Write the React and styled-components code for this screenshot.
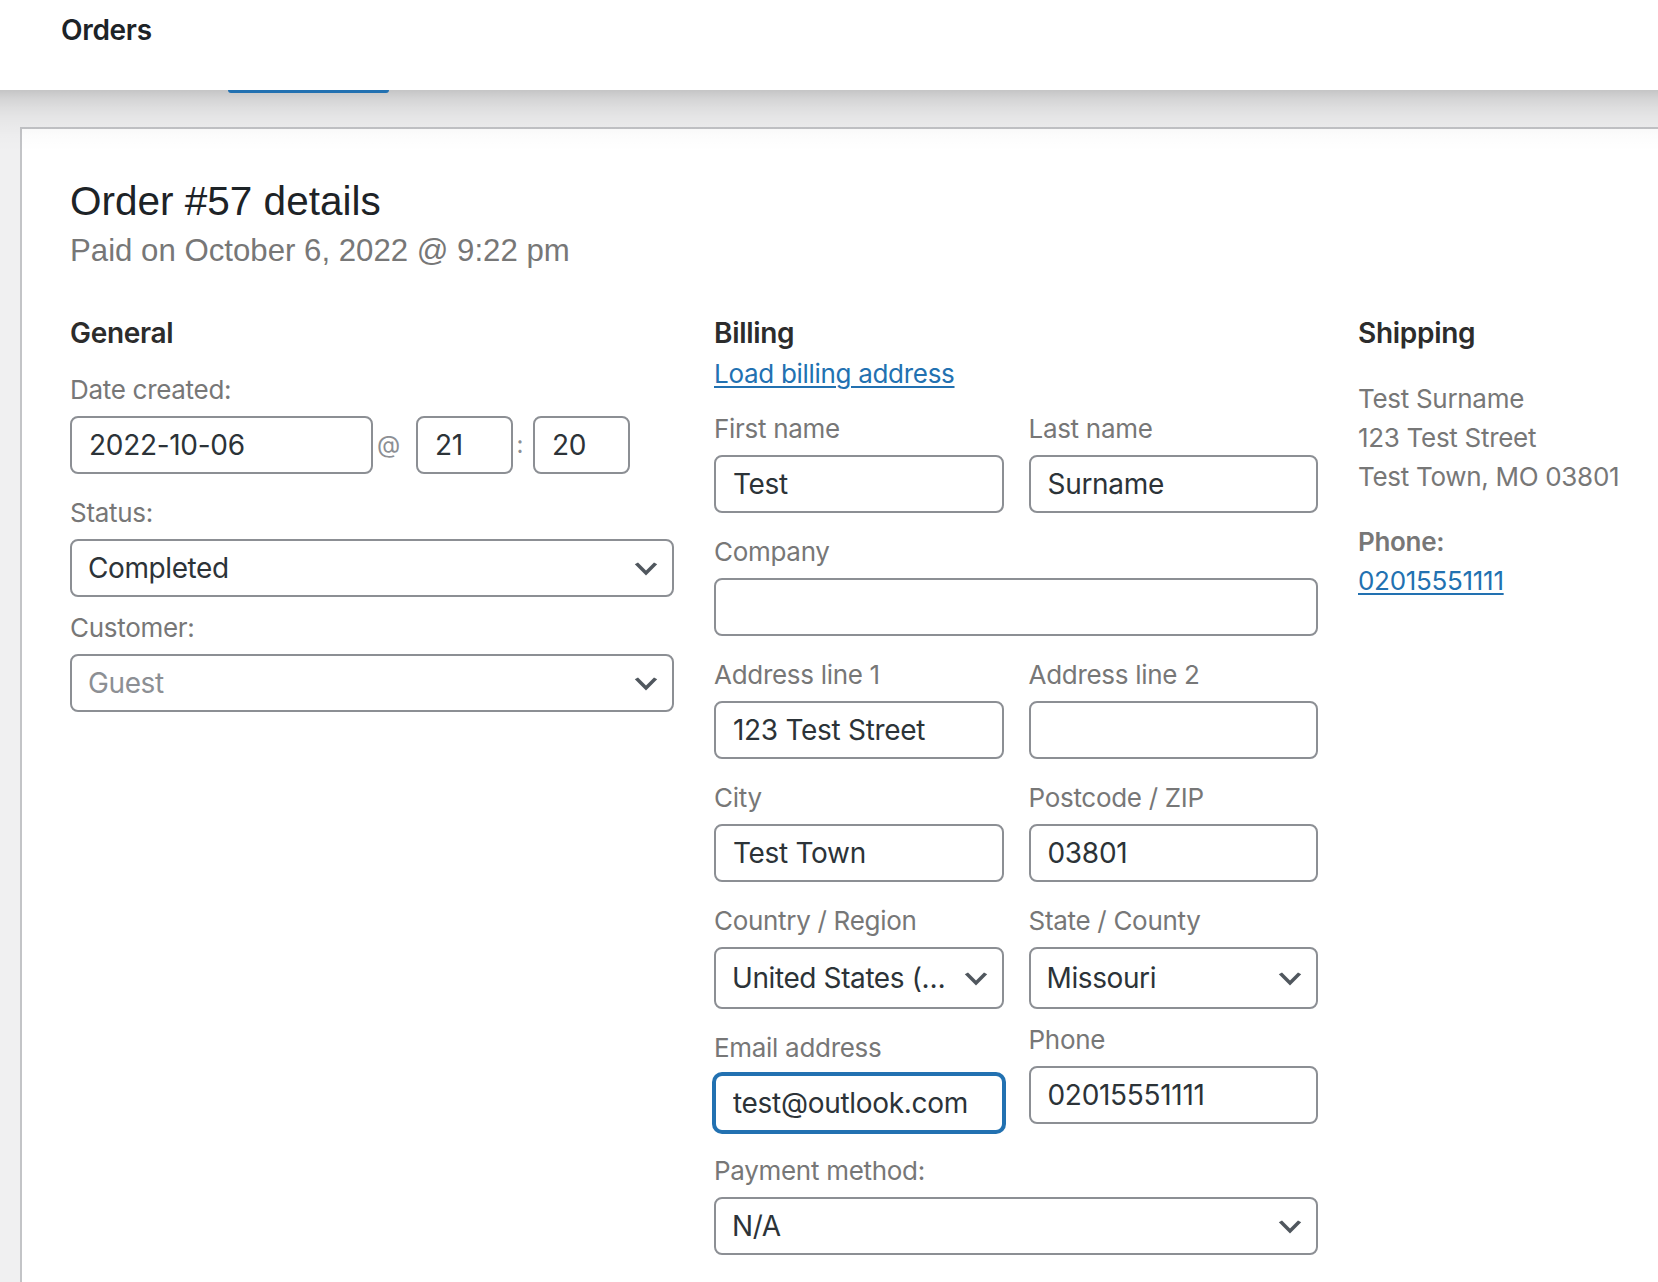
import React from 'react';
import styled, { createGlobalStyle } from 'styled-components';

const GlobalStyle = createGlobalStyle`
  html, body {
    margin: 0;
    padding: 0;
    height: 100%;
    overflow: hidden;
    background: #f0f0f1;
  }
  body {
    font-family: Inter, "Noto Sans", sans-serif;
    -webkit-font-smoothing: antialiased;
  }
  #root { height: 100%; }
  *, *::before, *::after { box-sizing: border-box; }
`;

const Page = styled.div`
  height: 100vh;
  display: flex;
  flex-direction: column;
  background: #f0f0f1;
  overflow: hidden;
`;

const Header = styled.header`
  position: relative;
  z-index: 2;
  flex: none;
  height: 90px;
  background: #fff;
  padding: 16px 0 0 61px;

  &::after {
    content: '';
    position: absolute;
    left: 0;
    right: 0;
    top: 100%;
    height: 62px;
    pointer-events: none;
    background: linear-gradient(
      to bottom,
      rgba(0, 0, 0, 0.18) 0px,
      rgba(0, 0, 0, 0.12) 8px,
      rgba(0, 0, 0, 0.075) 18px,
      rgba(0, 0, 0, 0.045) 28px,
      rgba(0, 0, 0, 0.028) 37px,
      rgba(0, 0, 0, 0.013) 46px,
      rgba(0, 0, 0, 0) 62px
    );
  }
`;

const PageTitle = styled.h1`
  margin: 0;
  font: 600 28px/28px Inter, sans-serif;
  letter-spacing: -0.3px;
  color: #1d2327;
`;

const TabIndicator = styled.span`
  position: absolute;
  z-index: 1;
  top: 100%;
  left: 228px;
  width: 161px;
  height: 3px;
  background: #2271b1;
  border-radius: 0 0 3px 3px;
`;

const Main = styled.main`
  flex: 1;
  min-height: 0;
  padding: 37px 0 0 20px;
  overflow: hidden;
`;

const Panel = styled.section`
  width: 2000px;
  min-height: 100%;
  background: #fff;
  border-top: 2px solid #c3c4c7;
  border-left: 2px solid #c3c4c7;
  padding: 48px 48px 40px 48px;
`;

const OrderTitle = styled.h2`
  margin: 0;
  font: 400 40.5px/1.2 "Liberation Sans", Arial, sans-serif;
  color: #1d2327;
`;

const PaidOn = styled.p`
  margin: 2px 0 0;
  font: 400 31.2px/1.5 "Liberation Sans", Arial, sans-serif;
  color: #777;
`;

const Columns = styled.div`
  display: grid;
  grid-template-columns: 604px 604px 320px;
  column-gap: 40px;
  align-items: start;
  margin-top: 40px;
`;

const Column = styled.div`
  min-width: 0;
`;

const SectionTitle = styled.h3`
  margin: 0;
  font: 600 28px/1.4 Inter, sans-serif;
  letter-spacing: -0.3px;
  color: #2c2c2c;
`;

const LoadRow = styled.p`
  margin: 0;
  font: 400 26px/39px Inter, sans-serif;
  letter-spacing: -0.3px;
`;

const Link = styled.a`
  color: #2271b1;
  text-decoration: underline;
  text-decoration-thickness: 2px;
  text-underline-offset: 3px;
  cursor: pointer;
`;

const FieldGrid = styled.div`
  display: grid;
  grid-template-columns: 1fr 1fr;
  column-gap: 25px;
  align-items: start;
`;

const Field = styled.div`
  margin-top: ${(p) => (p.$mt ?? 19)}px;
  grid-column: ${(p) => (p.$wide ? '1 / -1' : 'auto')};
  min-width: 0;
`;

const Label = styled.label`
  display: block;
  font: 400 26px/39px Inter, sans-serif;
  letter-spacing: -0.3px;
  color: #777;
  padding-bottom: 7px;
`;

const TextInput = styled.input`
  display: block;
  width: ${(p) => (p.$w ? `${p.$w}px` : '100%')};
  flex: none;
  height: 58px;
  margin: 0;
  padding: 0 17px;
  border: 2px solid ${(p) => (p.$focus ? '#2271b1' : '#8c8f94')};
  border-radius: 8px;
  box-shadow: ${(p) => (p.$focus ? '0 0 0 2px #2271b1' : 'none')};
  background: #fff;
  font: 400 28px Inter, sans-serif;
  letter-spacing: -0.3px;
  color: #2c3338;
  outline: none;
`;

const DateRow = styled.div`
  display: flex;
  align-items: center;
`;

const Sep = styled.span`
  flex: none;
  width: ${(p) => p.$w}px;
  margin: 0 ${(p) => p.$r}px 0 ${(p) => p.$l}px;
  text-align: center;
  font: 400 ${(p) => p.$size}px/1 Inter, sans-serif;
  color: #8c8f94;
  white-space: nowrap;
`;

const SelectBox = styled.div`
  display: flex;
  align-items: center;
  height: ${(p) => (p.$tall ? 62 : 58)}px;
  border: 2px solid #8c8f94;
  border-radius: 8px;
  background: #fff;
  padding: 0 10px 0 16px;
  font: 400 28px Inter, sans-serif;
  letter-spacing: -0.4px;
  color: ${(p) => (p.$placeholder ? '#8c8f94' : '#2c3338')};
`;

const SelectValue = styled.span`
  flex: 1;
  min-width: 0;
  white-space: nowrap;
  overflow: hidden;
  text-overflow: ellipsis;
`;

const ChevronSvg = styled.svg`
  flex: none;
  width: 32px;
  height: 32px;
  margin: 2px 0 0 -4px;
  fill: #50575e;
`;

const Chevron = () => (
  <ChevronSvg viewBox="0 0 20 20" aria-hidden="true">
    <path d="M5 6l5 5 5-5 2 1-7 7-7-7 2-1z" />
  </ChevronSvg>
);

const Select = ({ value, tall, placeholder }) => (
  <SelectBox $tall={tall} $placeholder={placeholder}>
    <SelectValue>{value}</SelectValue>
    <Chevron />
  </SelectBox>
);

const AddressText = styled.p`
  margin: ${(p) => p.$mt}px 0 0;
  font: 400 26px/39px Inter, sans-serif;
  letter-spacing: -0.3px;
  color: #777;
`;

const Strong = styled.strong`
  font-weight: 600;
`;

const billingRows = [
  { label: 'First name', value: 'Test', mt: 16 },
  { label: 'Last name', value: 'Surname', mt: 16 },
  { label: 'Company', value: '', wide: true },
  { label: 'Address line 1', value: '123 Test Street' },
  { label: 'Address line 2', value: '' },
  { label: 'City', value: 'Test Town' },
  { label: 'Postcode / ZIP', value: '03801' },
];

export default function App() {
  return (
    <>
      <GlobalStyle />
      <Page>
        <Header>
          <PageTitle>Orders</PageTitle>
          <TabIndicator />
        </Header>
        <Main>
          <Panel>
            <OrderTitle>Order #57 details</OrderTitle>
            <PaidOn>Paid on October 6, 2022 @ 9:22 pm</PaidOn>

            <Columns>
              <Column>
                <SectionTitle>General</SectionTitle>
                <Field $mt={16}>
                  <Label>Date created:</Label>
                  <DateRow>
                    <TextInput $w={303} defaultValue="2022-10-06" />
                    <Sep $w={21} $l={4} $r={18} $size={24}>@</Sep>
                    <TextInput $w={97} defaultValue="21" />
                    <Sep $w={8} $l={3} $r={9} $size={24}>:</Sep>
                    <TextInput $w={97} defaultValue="20" />
                  </DateRow>
                </Field>
                <Field>
                  <Label>Status:</Label>
                  <Select value="Completed" />
                </Field>
                <Field $mt={11}>
                  <Label>Customer:</Label>
                  <Select value="Guest" placeholder />
                </Field>
              </Column>

              <Column>
                <SectionTitle>Billing</SectionTitle>
                <LoadRow>
                  <Link>Load billing address</Link>
                </LoadRow>
                <FieldGrid>
                  {billingRows.map((r) => (
                    <Field key={r.label} $mt={r.mt} $wide={r.wide}>
                      <Label>{r.label}</Label>
                      <TextInput defaultValue={r.value} />
                    </Field>
                  ))}
                  <Field>
                    <Label>Country / Region</Label>
                    <Select value="United States (US)" tall />
                  </Field>
                  <Field>
                    <Label>State / County</Label>
                    <Select value="Missouri" tall />
                  </Field>
                  <Field>
                    <Label>Email address</Label>
                    <TextInput $focus defaultValue="test@outlook.com" />
                  </Field>
                  <Field $mt={11}>
                    <Label>Phone</Label>
                    <TextInput defaultValue="02015551111" />
                  </Field>
                  <Field $wide>
                    <Label>Payment method:</Label>
                    <Select value="N/A" />
                  </Field>
                </FieldGrid>
              </Column>

              <Column>
                <SectionTitle>Shipping</SectionTitle>
                <AddressText $mt={25}>
                  Test Surname
                  <br />
                  123 Test Street
                  <br />
                  Test Town, MO 03801
                </AddressText>
                <AddressText $mt={26}>
                  <Strong>Phone:</Strong>
                  <br />
                  <Link>02015551111</Link>
                </AddressText>
              </Column>
            </Columns>
          </Panel>
        </Main>
      </Page>
    </>
  );
}
